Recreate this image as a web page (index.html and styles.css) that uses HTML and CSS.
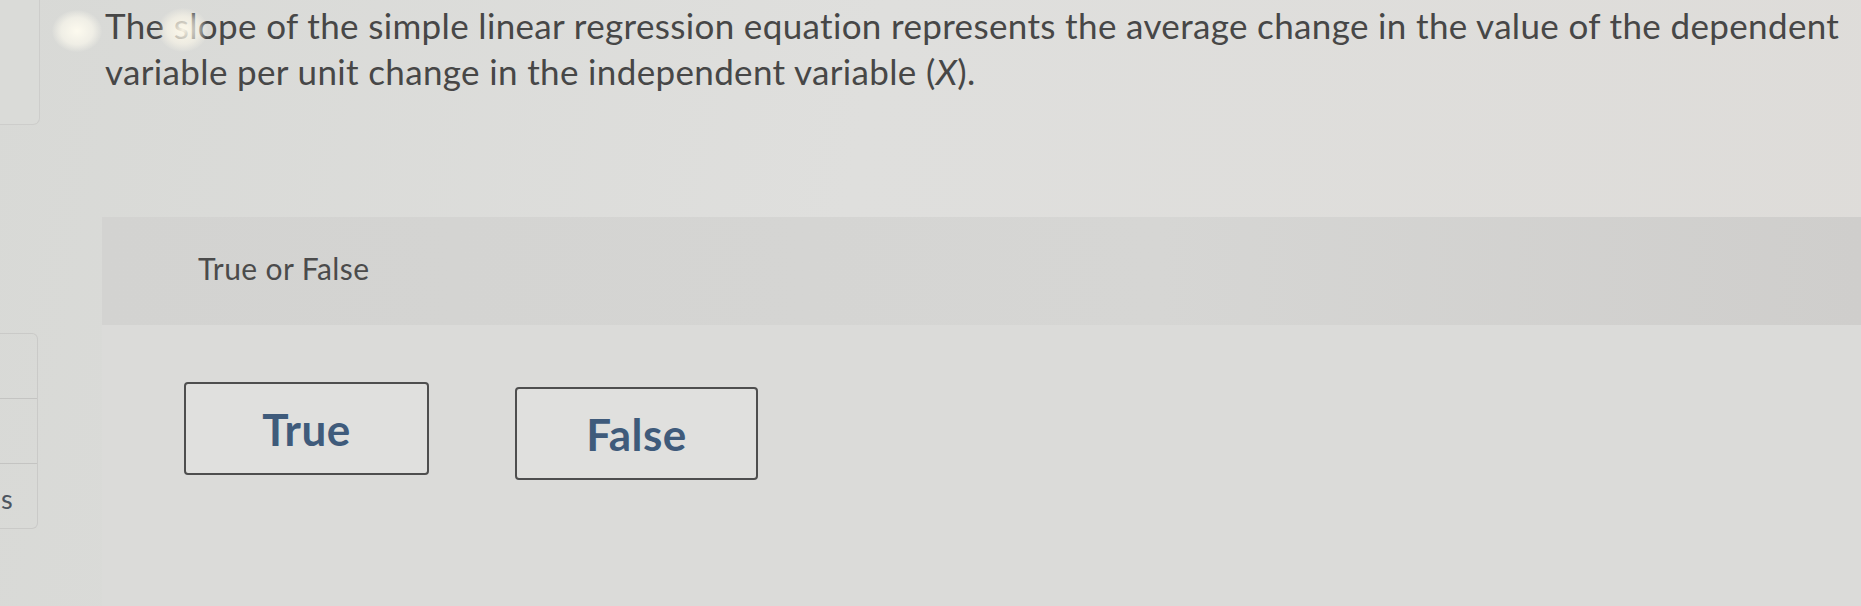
FILE: index.html
```html
<!DOCTYPE html>
<html lang="en">
<head>
<meta charset="utf-8">
<title>True or False</title>
<link rel="stylesheet" href="styles.css">
</head>
<body>
<div class="page">
  <aside class="sidebar">
    <div class="side-top"></div>
    <div class="side-list">
      <div class="side-item"></div>
      <div class="side-item"></div>
      <div class="side-item"><span class="side-label">s</span></div>
    </div>
  </aside>
  <main class="content">
    <p class="question">The slope of the simple linear regression equation represents the average change in the value of the dependent<br>variable per unit change in the independent variable (<i>X</i>).</p>
    <section class="answer-panel">
      <header class="panel-head">True or False</header>
      <div class="choices">
        <button class="choice">True</button>
        <button class="choice choice-low">False</button>
      </div>
    </section>
  </main>
  <span class="glare glare-a"></span>
  <span class="glare glare-b"></span>
</div>
</body>
</html>
```
FILE: styles.css
```css
html, body {
  margin: 0;
  padding: 0;
  height: 100%;
  overflow: hidden;
}

body {
  background: linear-gradient(100deg, #d8d9d6 0%, #dfdfdd 45%, #dedcd9 100%);
  font-family: Lato, "Open Sans", sans-serif;
  color: #474747;
}

.page {
  position: relative;
  display: flex;
  height: 606px;
}

/* clipped navigation column on the left */
.sidebar {
  width: 42px;
  flex: none;
  display: flex;
  flex-direction: column;
  overflow: hidden;
}

.side-top {
  width: 40px;
  height: 125px;
  border: 1px solid #cdcdcb;
  border-left: none;
  border-top: none;
  border-radius: 0 0 7px 0;
  background: #dadbd8;
  box-sizing: border-box;
}

.side-list {
  margin-top: 208px;
  width: 37px;
  border: 1px solid #cacac8;
  border-left: none;
  border-radius: 0 6px 6px 0;
  display: flex;
  flex-direction: column;
  overflow: hidden;
}

.side-item {
  height: 64px;
  border-top: 1px solid #c4c4c2;
  display: flex;
  align-items: center;
  overflow: hidden;
}

.side-item:first-child {
  border-top: none;
}

.side-label {
  padding: 4px 0 0 1px;
  font-size: 27px;
  color: #4d5560;
}

.content {
  flex: 1;
  min-width: 0;
  padding-left: 60px;
  display: flex;
  flex-direction: column;
}

.question {
  margin: 2px 0 0 3px;
  font-size: 35px;
  line-height: 46px;
  letter-spacing: 0.35px;
  white-space: nowrap;
  color: #474747;
}

.question i {
  font-style: italic;
}

.answer-panel {
  margin-top: 123px;
  flex: 1;
  background: #dbdbd9;
  display: flex;
  flex-direction: column;
}

.panel-head {
  height: 108px;
  padding: 0 0 6px 96px;
  box-sizing: border-box;
  display: flex;
  align-items: center;
  background: linear-gradient(90deg, #d3d3d1 0%, #d6d6d4 60%, #cfcecc 100%);
  font-size: 30px;
  letter-spacing: 0.4px;
  color: #4b4b4b;
}

.choices {
  display: flex;
  gap: 86px;
  padding: 57px 0 0 82px;
  align-items: flex-start;
}

.choice {
  width: 245px;
  height: 93px;
  background: #e0e0de;
  border: 2px solid #4e4e4e;
  border-radius: 4px;
  font-family: Lato, "Open Sans", sans-serif;
  font-weight: 700;
  font-size: 44px;
  letter-spacing: 0.5px;
  color: #3f5b7b;
  padding: 0;
}

.choice-low {
  margin-top: 5px;
  width: 243px;
}

/* soft light reflections on the screen */
.glare {
  position: absolute;
  border-radius: 50%;
  pointer-events: none;
}

.glare-a {
  left: 52px;
  top: 10px;
  width: 50px;
  height: 42px;
  background: radial-gradient(ellipse at center, rgba(255, 252, 240, 0.95) 0%, rgba(255, 252, 240, 0.6) 45%, rgba(255, 252, 240, 0) 72%);
}

.glare-b {
  left: 158px;
  top: 8px;
  width: 50px;
  height: 44px;
  background: radial-gradient(ellipse at center, rgba(255, 250, 235, 0.95) 0%, rgba(255, 250, 235, 0.55) 45%, rgba(255, 250, 235, 0) 72%);
}
```
